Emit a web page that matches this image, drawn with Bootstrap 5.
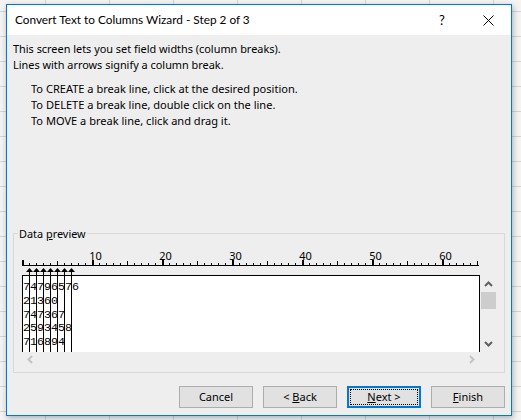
<!DOCTYPE html>
<html lang="en">
<head>
  <meta charset="UTF-8">
  <title>Convert Text to Columns Wizard</title>
  <link href="https://cdn.jsdelivr.net/npm/bootstrap@5.3.0/dist/css/bootstrap.min.css" rel="stylesheet">
  <style>
    html, body { height: 100%; }
    body {
      margin: 0;
      overflow: hidden;
      background-color: #f4f4f4;
      background-image:
        repeating-linear-gradient(to right, transparent 0 45px, #d4d4d4 45px 46px, transparent 46px 64px),
        repeating-linear-gradient(to bottom, transparent 0 11px, #d4d4d4 11px 12px, transparent 12px 25px);
    }
    .wiz-window {
      width: 506px;
      height: 412px;
      margin: 4px 0 0 6px;
      border: 1px solid #0078d7;
      background: #eeeeee;
      box-shadow: 1px 2px 6px rgba(0,0,0,.3);
      color: #000;
      font-family: "Noto Sans", sans-serif;
      font-size: 10.9px;
      line-height: 16px;
    }
    .wiz-title {
      height: 30px;
      background: #fff;
      padding-left: 8px;
      font-family: "Lato", sans-serif;
      font-size: 11.8px;
    }
    .wiz-help { width: 46px; text-align: center; font-size: 13px; }
    .wiz-close { width: 46px; }
    .wiz-intro { padding: 6px 0 0 6px; }
    .wiz-steps { padding: 8px 0 0 24px; font-size: 11.05px; }
    .wiz-group {
      position: relative;
      width: 492px;
      height: 140px;
      margin: 104px 0 0 6px;
      border: 1px solid #d9d9d9;
    }
    .wiz-legend {
      position: absolute;
      top: -8px;
      left: 4px;
      padding: 0 1px;
      background: #eeeeee;
    }
    .wiz-ruler { display: block; margin: 10px 0 0 8px; }
    .wiz-preview-row { margin-left: 8px; }
    .wiz-preview {
      position: relative;
      width: 458px;
      height: 77px;
      background: #fff;
      border: 1px solid #000;
      border-bottom: 0;
      overflow: hidden;
      font-family: "Liberation Mono", monospace;
      font-size: 11.67px;
      line-height: 13.75px;
      padding: 5px 0 0 0;
      white-space: pre;
    }
    .wiz-break {
      position: absolute;
      top: 0;
      bottom: 0;
      width: 1px;
      background: #000;
    }
    .wiz-vscroll { width: 15px; margin-left: 1px; }
    .wiz-up { margin-top: 6px; }
    .wiz-thumb { width: 15px; height: 17px; background: #cdcdcd; margin-top: 4px; }
    .wiz-down { margin-top: 31px; }
    .wiz-hscroll { padding: 3px 29px 0 13px; }
    .wiz-buttons { gap: 10px; padding: 13px 6px 0 0; }
    .wiz-btn {
      width: 74px;
      height: 22px;
      padding: 0;
      border-radius: 0;
      border: 1px solid #adadad;
      background: #e1e1e1;
      color: #000;
      font-size: 11px;
      line-height: 18px;
    }
    .wiz-btn-default { border: 2px solid #0078d7; position: relative; }
    .wiz-btn-default::after {
      content: "";
      position: absolute;
      inset: 1px;
      border: 1px dotted #000;
    }
  </style>
</head>
<body>
  <div class="wiz-window d-flex flex-column">
    <div class="wiz-title d-flex align-items-center">
      <div class="flex-grow-1">Convert Text to Columns Wizard - Step 2 of 3</div>
      <div class="wiz-help">?</div>
      <div class="wiz-close d-flex justify-content-center">
        <svg width="11" height="11" viewBox="0 0 11 11"><path d="M.5.5l10 10M10.5.5l-10 10" stroke="#000" fill="none"/></svg>
      </div>
    </div>
    <div class="wiz-intro">This screen lets you set field widths (column breaks).<br>Lines with arrows signify a column break.</div>
    <div class="wiz-steps">To CREATE a break line, click at the desired position.<br>To DELETE a break line, double click on the line.<br>To MOVE a break line, click and drag it.</div>

    <div class="wiz-group">
      <div class="wiz-legend">Data <u>p</u>review</div>
      <svg class="wiz-ruler" id="ruler" width="470" height="31"></svg>
      <div class="wiz-preview-row d-flex">
        <div class="wiz-preview" id="preview">74796576
21360
747367
2593458
716894</div>
        <div class="wiz-vscroll d-flex flex-column align-items-center">
          <svg class="wiz-up" width="9" height="7" viewBox="0 0 9 7"><path d="M1 5l3.5-3.5L8 5" stroke="#606060" stroke-width="2" fill="none"/></svg>
          <div class="wiz-thumb"></div>
          <svg class="wiz-down" width="9" height="7" viewBox="0 0 9 7"><path d="M1 2l3.5 3.5L8 2" stroke="#606060" stroke-width="2" fill="none"/></svg>
        </div>
      </div>
      <div class="wiz-hscroll d-flex justify-content-between">
        <svg width="7" height="9" viewBox="0 0 7 9"><path d="M5 1L1.5 4.5 5 8" stroke="#c4c4c4" stroke-width="2" fill="none"/></svg>
        <svg width="7" height="9" viewBox="0 0 7 9"><path d="M2 1l3.5 3.5L2 8" stroke="#c4c4c4" stroke-width="2" fill="none"/></svg>
      </div>
    </div>

    <div class="wiz-buttons d-flex justify-content-end">
      <button class="btn wiz-btn">Cancel</button>
      <button class="btn wiz-btn">&lt; <u>B</u>ack</button>
      <button class="btn wiz-btn wiz-btn-default"><u>N</u>ext &gt;</button>
      <button class="btn wiz-btn"><u>F</u>inish</button>
    </div>
  </div>

  <script>
    // ruler ticks and labels, 7px per character
    const breaks = [1, 2, 3, 4, 5, 6, 7];
    let svg = '<rect x="0" y="21" width="457" height="1" fill="#000"/>';
    for (let i = 0; i <= 65; i++) {
      const h = i % 10 === 0 ? 5 : i % 5 === 0 ? 4 : 2;
      const w = i % 10 === 0 ? 2 : 1;
      svg += `<rect x="${i * 7}" y="${21 - h}" width="${w}" height="${h}" fill="#000"/>`;
      if (i % 10 === 0 && i > 0) {
        svg += `<text x="${i * 7 + 3.5}" y="16" text-anchor="middle" font-family="Noto Sans, sans-serif" font-size="11">${i}</text>`;
      }
    }
    breaks.forEach(b => {
      const x = b * 7;
      svg += `<path d="M${x + 0.5} 24L${x + 4} 28L${x - 3} 28Z" fill="#000"/>`;
      svg += `<rect x="${x}" y="28" width="1" height="3" fill="#000"/>`;
    });
    document.getElementById("ruler").innerHTML = svg;

    const preview = document.getElementById("preview");
    breaks.forEach(b => {
      const line = document.createElement("div");
      line.className = "wiz-break";
      line.style.left = (b * 7 - 1) + "px";
      preview.appendChild(line);
    });
  </script>
  <script src="https://cdn.jsdelivr.net/npm/bootstrap@5.3.0/dist/js/bootstrap.bundle.min.js"></script>
</body>
</html>
